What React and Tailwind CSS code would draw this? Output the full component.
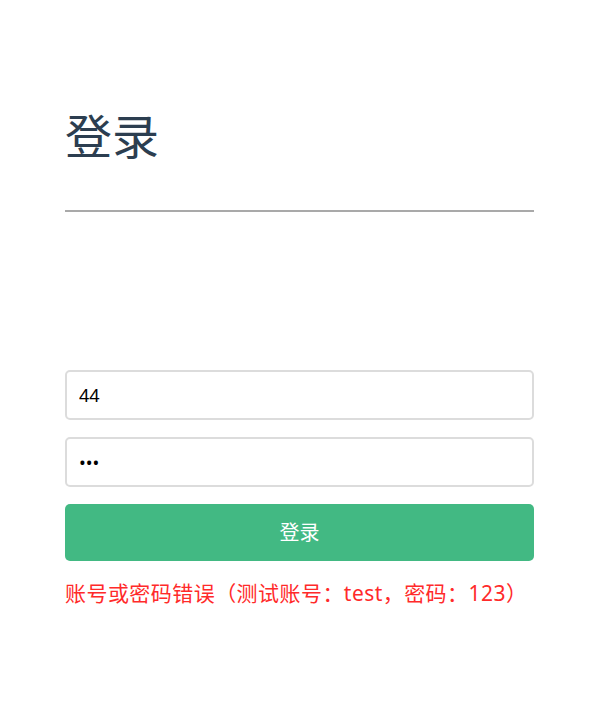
export default function App() {
  const font = { fontFamily: '"Noto Sans", "Noto Sans CJK SC", sans-serif' };
  return (
    <div className="min-h-[701px] w-full bg-white" style={font}>
      <div className="ml-[65px] w-[469px] pt-[113px]">
        <h1 className="h-[47px] text-[47px] leading-[47px] font-normal text-[#2c3e50]">登录</h1>
        <div className="mt-[50px] h-[2px] w-full bg-[#a9a9a9]"></div>
        <div className="mt-[158px] flex flex-col">
          <input
            className="h-[50px] w-full rounded-[5px] border-2 border-[#dcdcdc] px-[12px] text-[18px] text-black outline-none"
            defaultValue="44"
            style={font}
          />
          <input
            type="password"
            className="mt-[17px] h-[50px] w-full rounded-[5px] border-2 border-[#dcdcdc] px-[12px] text-[18px] text-black outline-none"
            defaultValue="123"
            style={font}
          />
          <button
            className="mt-[17px] h-[57px] w-full rounded-[5px] bg-[#42b983] text-[20px] text-white"
            style={font}
          >
            登录
          </button>
          <p className="mt-[18px] text-[21px] leading-[28px] tracking-[0.45px] text-[#ff2a2a]">账号或密码错误（测试账号：test，密码：123）</p>
        </div>
      </div>
    </div>
  );
}
